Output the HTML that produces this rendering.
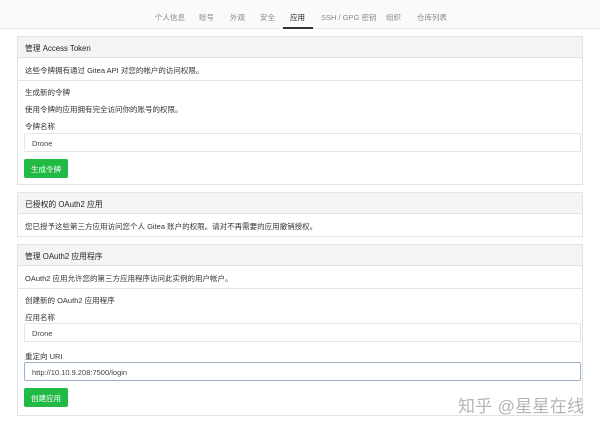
<!DOCTYPE html>
<html><head><meta charset="utf-8"><style>
*{box-sizing:border-box;margin:0;padding:0}
body{width:600px;height:426px;background:#fff;font-family:"Liberation Sans","Noto Sans CJK SC",sans-serif;font-size:7.5px;color:#333;position:relative;overflow:hidden}
.nav{position:absolute;left:0;top:0;width:600px;height:29px;background:#fafafa;border-bottom:1px solid #e8e8e8}
.nav span{position:absolute;top:12px;color:#888;font-size:7.5px}
.nav .act{color:#222}
.panel{position:absolute;left:17px;width:566px;border:1px solid #e3e3e3;background:#fff}
.hd{height:21px;background:#f4f4f4;border-bottom:1px solid #e3e3e3;padding:6px 7px 0;color:#222;font-size:7.8px}
.row{border-bottom:1px solid #e6e6e6;padding:7px 7px 0;height:23px}
.abs{position:absolute;left:7px}
.inp{position:absolute;left:6px;width:557px;height:19px;border:1px solid #e5e5e5;border-radius:2px;padding:5px 0 0 7px;color:#444;font-size:7.5px}
.btn{position:absolute;left:6px;width:44px;height:19px;background:#21ba45;border-radius:2px;color:#fff;text-align:center;padding-top:5px;font-size:7.5px}
.wm{position:absolute;left:458px;top:392px;font-size:17px;color:#b5b5b5;letter-spacing:0.3px}
</style></head><body>
<div class="nav">
<span style="left:155px">个人信息</span><span style="left:199px">账号</span><span style="left:230px">外观</span><span style="left:260px">安全</span><span class="act" style="left:290px">应用</span><span style="left:321px">SSH / GPG 密钥</span><span style="left:386px">组织</span><span style="left:417px">仓库列表</span>
</div>
<div style="position:absolute;left:283px;top:27px;width:30px;height:1.5px;background:#333"></div>
<div class="panel" style="top:36px;height:149px">
<div class="hd">管理 Access Token</div>
<div class="row">这些令牌拥有通过 Gitea API 对您的帐户的访问权限。</div>
<div class="abs" style="top:50px">生成新的令牌</div>
<div class="abs" style="top:67px">使用令牌的应用拥有完全访问你的账号的权限。</div>
<div class="abs" style="top:84px">令牌名称</div>
<div class="inp" style="top:96px">Drone</div>
<div class="btn" style="top:122px">生成令牌</div>
</div>
<div class="panel" style="top:192px;height:45px">
<div class="hd">已授权的 OAuth2 应用</div>
<div class="row" style="border-bottom:none">您已授予这些第三方应用访问您个人 Gitea 账户的权限。请对不再需要的应用撤销授权。</div>
</div>
<div class="panel" style="top:244px;height:172px">
<div class="hd">管理 OAuth2 应用程序</div>
<div class="row">OAuth2 应用允许您的第三方应用程序访问此实例的用户帐户。</div>
<div class="abs" style="top:50px">创建新的 OAuth2 应用程序</div>
<div class="abs" style="top:67px">应用名称</div>
<div class="inp" style="top:78px">Drone</div>
<div class="abs" style="top:106px">重定向 URI</div>
<div class="inp" style="top:117px;border-color:#9eb0bf">http://10.10.9.208:7500/login</div>
<div class="btn" style="top:143px">创建应用</div>
</div>
<div class="wm">知乎 @星星在线</div>
</body></html>
